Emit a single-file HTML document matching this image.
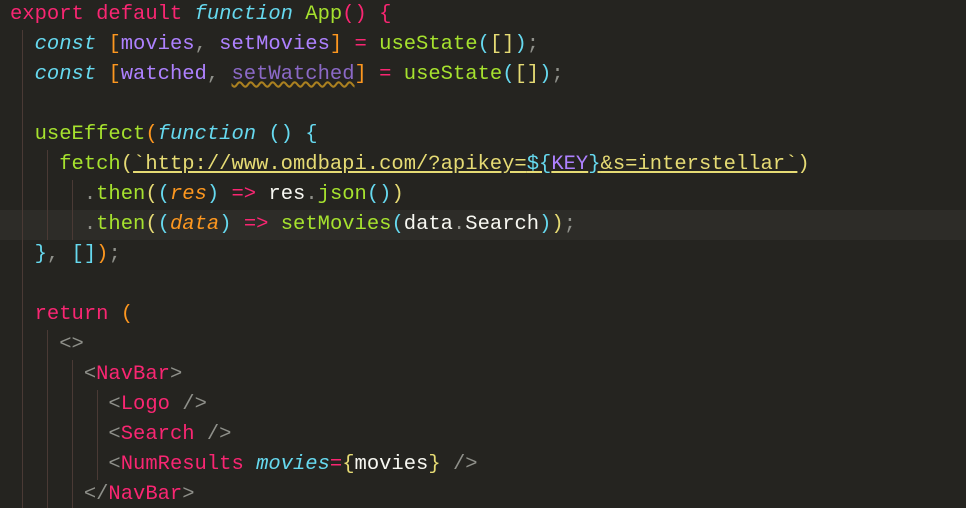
<!DOCTYPE html>
<html><head><style>
html,body{margin:0;padding:0;background:#252420;width:966px;height:508px;overflow:hidden}
.ed{position:relative;font-family:"Liberation Mono",monospace;font-size:20.5px;white-space:pre;color:#f8f8f2}
.l{position:absolute;left:10px;height:30px;line-height:30px}
.cur{position:absolute;left:0;top:210px;width:966px;height:30px;background:#2d2c28}
.g{position:absolute;width:1px;background:#4a3a35}
.k{color:#f92672}.i{color:#66d9ef;font-style:italic}.f{color:#a6e22e}.p{color:#ae81ff}
.o{color:#fd971f}.y{color:#e6db74}.d{color:#8f908a}.c{color:#66d9ef}.a{color:#fd971f;font-style:italic}
.w{color:#f8f8f2}.u{text-decoration:underline;text-decoration-color:#e6db74}
</style></head><body><div class="ed">
<div class="cur"></div>
<div class="g" style="left:22px;top:30px;height:478px"></div>
<div class="g" style="left:47px;top:150px;height:90px"></div>
<div class="g" style="left:47px;top:330px;height:178px"></div>
<div class="g" style="left:72px;top:180px;height:60px"></div>
<div class="g" style="left:72px;top:360px;height:148px"></div>
<div class="g" style="left:97px;top:390px;height:90px"></div>
<div class="l" style="top:0"><span class="k">export default </span><span class="i">function</span> <span class="f">App</span><span class="k">() {</span></div>
<div class="l" style="top:30px">  <span class="i">const</span> <span class="o">[</span><span class="p">movies</span><span class="d">, </span><span class="p">setMovies</span><span class="o">]</span> <span class="k">=</span> <span class="f">useState</span><span class="c">(</span><span class="y">[]</span><span class="c">)</span><span class="d">;</span></div>
<div class="l" style="top:60px">  <span class="i">const</span> <span class="o">[</span><span class="p">watched</span><span class="d">, </span><span class="p" style="opacity:.75;text-decoration:underline wavy #d8a020">setWatched</span><span class="o">]</span> <span class="k">=</span> <span class="f">useState</span><span class="c">(</span><span class="y">[]</span><span class="c">)</span><span class="d">;</span></div>
<div class="l" style="top:120px">  <span class="f">useEffect</span><span class="o">(</span><span class="i">function</span> <span class="c">()</span> <span class="c">{</span></div>
<div class="l" style="top:150px">    <span class="f">fetch</span><span class="y">(</span><span class="y u">`http://www.omdbapi.com/?apikey=<span class="c">${</span><span class="p">KEY</span><span class="c">}</span>&amp;s=interstellar`</span><span class="y">)</span></div>
<div class="l" style="top:180px">      <span class="d">.</span><span class="f">then</span><span class="y">(</span><span class="c">(</span><span class="a">res</span><span class="c">)</span> <span class="k">=&gt;</span> <span class="w">res</span><span class="d">.</span><span class="f">json</span><span class="c">()</span><span class="y">)</span></div>
<div class="l" style="top:210px">      <span class="d">.</span><span class="f">then</span><span class="y">(</span><span class="c">(</span><span class="a">data</span><span class="c">)</span> <span class="k">=&gt;</span> <span class="f">setMovies</span><span class="c">(</span><span class="w">data</span><span class="d">.</span><span class="w">Search</span><span class="c">)</span><span class="y">)</span><span class="d">;</span></div>
<div class="l" style="top:240px">  <span class="c">}</span><span class="d">, </span><span class="c">[]</span><span class="o">)</span><span class="d">;</span></div>
<div class="l" style="top:300px">  <span class="k">return</span> <span class="o">(</span></div>
<div class="l" style="top:330px">    <span class="d">&lt;&gt;</span></div>
<div class="l" style="top:360px">      <span class="d">&lt;</span><span class="k">NavBar</span><span class="d">&gt;</span></div>
<div class="l" style="top:390px">        <span class="d">&lt;</span><span class="k">Logo</span> <span class="d">/&gt;</span></div>
<div class="l" style="top:420px">        <span class="d">&lt;</span><span class="k">Search</span> <span class="d">/&gt;</span></div>
<div class="l" style="top:450px">        <span class="d">&lt;</span><span class="k">NumResults</span> <span class="i">movies</span><span class="k">=</span><span class="y">{</span><span class="w">movies</span><span class="y">}</span> <span class="d">/&gt;</span></div>
<div class="l" style="top:480px">      <span class="d">&lt;/</span><span class="k">NavBar</span><span class="d">&gt;</span></div>
</div></body></html>
